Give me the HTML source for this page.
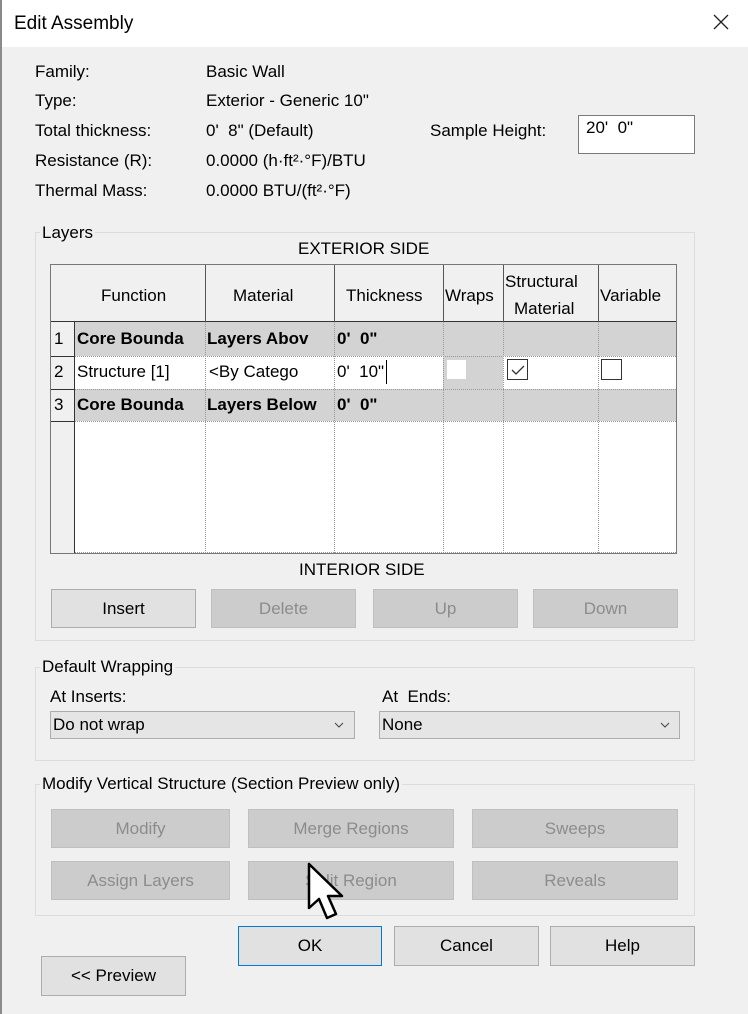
<!DOCTYPE html>
<html><head><meta charset="utf-8"><style>
*{box-sizing:border-box;margin:0;padding:0}
body{width:748px;height:1014px;overflow:hidden;background:#f0f0f0;font-family:"Liberation Sans",sans-serif;font-size:17px;color:#000;position:relative}
.a{position:absolute;white-space:nowrap}
.t{position:absolute;line-height:22px;white-space:nowrap}
.grp{position:absolute;border:1px solid #dcdcdc}
.btn{position:absolute;background:#e1e1e1;border:1px solid #adadad;display:flex;align-items:center;justify-content:center;font-size:17px}
.dis{background:#cccccc;border-color:#bfbfbf;color:#8c8c8c}
.b{font-weight:bold}
.vl{position:absolute;border-left:1px dotted #999;top:322px;height:231px}
.hl{position:absolute;border-top:1px dotted #999;left:75px;width:601px}
</style></head><body>
<div class="a" style="left:0;top:0;width:748px;height:47px;background:#fff"></div>
<div class="a" style="left:0;top:0;width:2px;height:1014px;background:#8a8a8a"></div>
<div class="t" style="left:14px;top:13px;font-size:19px">Edit Assembly</div>
<svg class="a" style="left:713px;top:14px" width="16" height="16"><path d="M1 1L15 15M15 1L1 15" stroke="#222" stroke-width="1.3"/></svg>

<div class="t" style="left:35px;top:61px">Family:</div><div class="t" style="left:206px;top:61px">Basic Wall</div>
<div class="t" style="left:35px;top:90px">Type:</div><div class="t" style="left:206px;top:90px">Exterior - Generic 10"</div>
<div class="t" style="left:35px;top:120px">Total thickness:</div><div class="t" style="left:206px;top:120px">0'&nbsp; 8" (Default)</div>
<div class="t" style="left:35px;top:150px">Resistance (R):</div><div class="t" style="left:206px;top:150px">0.0000 (h·ft²·°F)/BTU</div>
<div class="t" style="left:35px;top:180px">Thermal Mass:</div><div class="t" style="left:206px;top:180px">0.0000 BTU/(ft²·°F)</div>
<div class="t" style="left:430px;top:120px">Sample Height:</div>
<div class="a" style="left:578px;top:115px;width:117px;height:39px;background:#fff;border:1px solid #7a7a7a"></div>
<div class="t" style="left:586px;top:117px">20'&nbsp; 0"</div>

<div class="grp" style="left:35px;top:232px;width:660px;height:409px"></div>
<div class="t" style="left:40px;top:222px;background:#f0f0f0;padding:0 2px">Layers</div>
<div class="t" style="left:298px;top:238px">EXTERIOR SIDE</div>

<div class="a" style="left:50px;top:264px;width:627px;height:290px;background:#fff;border:1px solid #777"></div>
<div class="a" style="left:51px;top:265px;width:625px;height:57px;background:#f0f0f0;border-bottom:1.5px solid #333"></div>
<div class="a" style="left:51px;top:322px;width:24px;height:231px;background:#f0f0f0;border-right:1.5px solid #333"></div>
<div class="a" style="left:75px;top:322px;width:601px;height:34px;background:#d3d3d3"></div>
<div class="a" style="left:75px;top:389px;width:601px;height:32px;background:#d3d3d3"></div>
<div class="a" style="left:443px;top:356px;width:60px;height:33px;background:#d3d3d3"></div>
<div class="a" style="left:51px;top:356px;width:24px;border-top:1px solid #333"></div>
<div class="a" style="left:51px;top:389px;width:24px;border-top:1px solid #333"></div>
<div class="a" style="left:51px;top:421px;width:24px;border-top:1.5px solid #333"></div>
<div class="a" style="left:205px;top:265px;height:57px;border-left:1px solid #555"></div>
<div class="a" style="left:334px;top:265px;height:57px;border-left:1px solid #555"></div>
<div class="a" style="left:443px;top:265px;height:57px;border-left:1px solid #555"></div>
<div class="a" style="left:503px;top:265px;height:57px;border-left:1px solid #555"></div>
<div class="a" style="left:598px;top:265px;height:57px;border-left:1px solid #555"></div>
<div class="vl" style="left:205px"></div><div class="vl" style="left:334px"></div><div class="vl" style="left:443px"></div><div class="vl" style="left:503px"></div><div class="vl" style="left:598px"></div>
<div class="hl" style="top:356px"></div><div class="hl" style="top:389px"></div><div class="hl" style="top:421px"></div><div class="hl" style="top:552px"></div>

<div class="t" style="left:101px;top:285px">Function</div>
<div class="t" style="left:233px;top:285px">Material</div>
<div class="t" style="left:346px;top:285px">Thickness</div>
<div class="t" style="left:445px;top:285px">Wraps</div>
<div class="t" style="left:505px;top:271px">Structural</div>
<div class="t" style="left:514px;top:298px">Material</div>
<div class="t" style="left:600px;top:285px">Variable</div>

<div class="t" style="left:54px;top:328px">1</div>
<div class="t b" style="left:77px;top:328px;width:127px;overflow:hidden">Core Bounda</div>
<div class="t b" style="left:207px;top:328px;width:127px;overflow:hidden">Layers Abov</div>
<div class="t b" style="left:337px;top:328px">0'&nbsp; 0"</div>
<div class="t" style="left:54px;top:361px">2</div>
<div class="t" style="left:77px;top:361px">Structure [1]</div>
<div class="t" style="left:209px;top:361px">&lt;By Catego</div>
<div class="t" style="left:337px;top:361px">0'&nbsp; 10"</div>
<div class="a" style="left:386px;top:360px;width:1px;height:24px;background:#000"></div>
<div class="a" style="left:447px;top:360px;width:19px;height:19px;background:#fff"></div>
<div class="a" style="left:507px;top:359px;width:21px;height:21px;border:1.5px solid #333;background:#fff"></div>
<svg class="a" style="left:509px;top:361px" width="18" height="18"><path d="M3 9L7 13L15 5" stroke="#333" stroke-width="1.3" fill="none"/></svg>
<div class="a" style="left:601px;top:359px;width:21px;height:21px;border:1.5px solid #333;background:#fff"></div>
<div class="t" style="left:54px;top:394px">3</div>
<div class="t b" style="left:77px;top:394px;width:127px;overflow:hidden">Core Bounda</div>
<div class="t b" style="left:207px;top:394px;width:127px;overflow:hidden">Layers Below</div>
<div class="t b" style="left:337px;top:394px">0'&nbsp; 0"</div>

<div class="t" style="left:299px;top:559px">INTERIOR SIDE</div>
<div class="btn" style="left:51px;top:589px;width:145px;height:39px">Insert</div>
<div class="btn dis" style="left:211px;top:589px;width:145px;height:39px">Delete</div>
<div class="btn dis" style="left:373px;top:589px;width:145px;height:39px">Up</div>
<div class="btn dis" style="left:533px;top:589px;width:145px;height:39px">Down</div>

<div class="grp" style="left:35px;top:667px;width:660px;height:94px"></div>
<div class="t" style="left:40px;top:656px;background:#f0f0f0;padding:0 2px">Default Wrapping</div>
<div class="t" style="left:50px;top:686px">At Inserts:</div>
<div class="t" style="left:382px;top:686px">At&nbsp; Ends:</div>
<div class="a" style="left:50px;top:711px;width:305px;height:28px;background:#e5e5e5;border:1px solid #adadad"></div>
<div class="t" style="left:53px;top:714px">Do not wrap</div>
<svg class="a" style="left:334px;top:721px" width="10" height="8"><path d="M1 2L5 6L9 2" stroke="#444" fill="none"/></svg>
<div class="a" style="left:379px;top:711px;width:301px;height:28px;background:#e5e5e5;border:1px solid #adadad"></div>
<div class="t" style="left:382px;top:714px">None</div>
<svg class="a" style="left:660px;top:721px" width="10" height="8"><path d="M1 2L5 6L9 2" stroke="#444" fill="none"/></svg>

<div class="grp" style="left:35px;top:784px;width:660px;height:132px"></div>
<div class="t" style="left:40px;top:773px;background:#f0f0f0;padding:0 2px">Modify Vertical Structure (Section Preview only)</div>
<div class="btn dis" style="left:51px;top:809px;width:179px;height:39px">Modify</div>
<div class="btn dis" style="left:248px;top:809px;width:206px;height:39px">Merge Regions</div>
<div class="btn dis" style="left:472px;top:809px;width:206px;height:39px">Sweeps</div>
<div class="btn dis" style="left:51px;top:861px;width:179px;height:39px">Assign Layers</div>
<div class="btn dis" style="left:248px;top:861px;width:206px;height:39px">Split Region</div>
<div class="btn dis" style="left:472px;top:861px;width:206px;height:39px">Reveals</div>

<div class="btn" style="left:238px;top:926px;width:144px;height:40px;border:1.5px solid #0078d7">OK</div>
<div class="btn" style="left:394px;top:926px;width:145px;height:40px">Cancel</div>
<div class="btn" style="left:550px;top:926px;width:145px;height:40px">Help</div>
<div class="btn" style="left:41px;top:956px;width:145px;height:40px">&lt;&lt; Preview</div>

<svg class="a" style="left:306px;top:862px" width="44" height="66"><path d="M3 2L3 46L13 37L21 56L30 52L22 34L36 34Z" fill="#fff" stroke="#000" stroke-width="2.5" stroke-linejoin="round"/></svg>
</body></html>
